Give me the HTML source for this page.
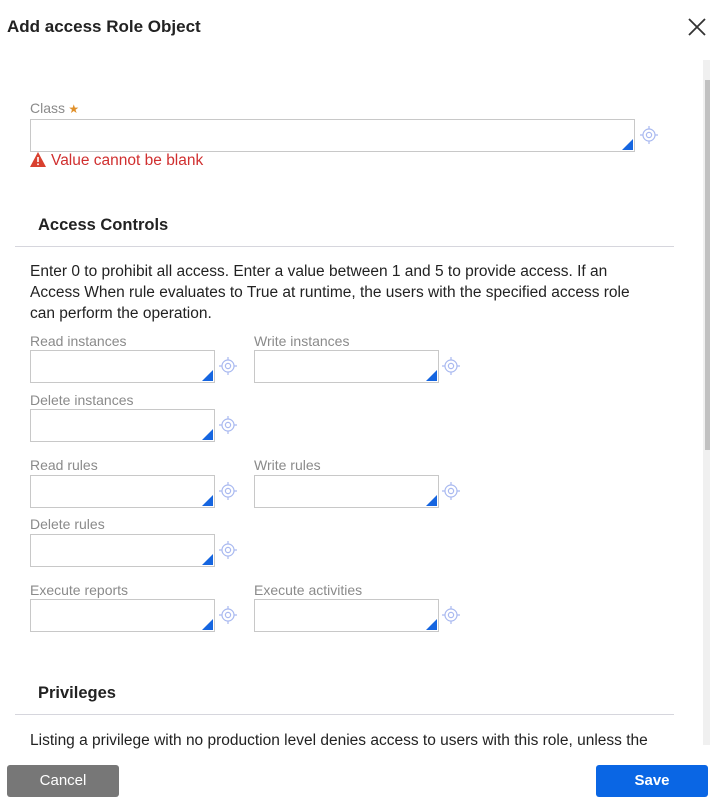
<!DOCTYPE html>
<html><head><style>
*{box-sizing:border-box;margin:0;padding:0}
body{width:710px;height:798px;overflow:hidden;background:#fff;font-family:"Liberation Sans",sans-serif;position:relative;color:#222}
.a{position:absolute}
.lbl{position:absolute;font-size:14px;color:#8a8a8a}
.inp{position:absolute;border:1px solid #c8c8c8;height:33px;background:#fff}
.inp:after{content:"";position:absolute;right:1px;bottom:1px;border-style:solid;border-width:0 0 11px 11px;border-color:transparent transparent #1565e0 transparent}
.ic{position:absolute;width:18px;height:18px}
.h{position:absolute;font-size:16.5px;font-weight:bold;color:#222}
.hr{position:absolute;left:15px;width:659px;height:1px;background:#d6d6dd}
.p{position:absolute;left:30px;font-size:15.5px;line-height:21px;color:#222;white-space:nowrap}
</style></head><body>
<div class="a" style="left:7px;top:17px;font-size:17px;font-weight:bold;color:#222">Add access Role Object</div>
<svg class="a" style="left:687px;top:17px" width="20" height="20" viewBox="0 0 20 20"><path d="M2 2L18 18M18 2L2 18" stroke="#333" stroke-width="1.8"/></svg>
<div class="a" style="left:703px;top:60px;width:7px;height:685px;background:#f0f0f0"></div>
<div class="a" style="left:705px;top:80px;width:5px;height:370px;background:#c1c1c1"></div>

<div class="lbl" style="left:30px;top:100px">Class<span style="color:#e0902a;font-size:12px"> ★</span></div>
<div class="inp" style="left:30px;top:119px;width:605px"></div>
<svg class="ic" style="left:640px;top:126px" viewBox="0 0 18 18"><circle cx="9" cy="9" r="6" fill="none" stroke="#a9b9f0" stroke-width="1.2"/><circle cx="9" cy="9" r="2.6" fill="none" stroke="#a9b9f0" stroke-width="1.2"/><path d="M9 0v3M9 15v3M0 9h3M15 9h3" stroke="#a9b9f0" stroke-width="1.2"/></svg>
<svg class="a" style="left:30px;top:152px" width="16" height="15" viewBox="0 0 16 15"><path d="M8 0L16 15H0Z" fill="#d9402f"/><rect x="7.2" y="5" width="1.6" height="5" fill="#fff"/><rect x="7.2" y="11.5" width="1.6" height="1.6" fill="#fff"/></svg>
<div class="a" style="left:51px;top:152px;font-size:15.5px;color:#d02f2f">Value cannot be blank</div>

<div class="h" style="left:38px;top:216px">Access Controls</div>
<div class="hr" style="top:246px"></div>
<div class="p" style="top:261px">Enter 0 to prohibit all access. Enter a value between 1 and 5 to provide access. If an<br>Access When rule evaluates to True at runtime, the users with the specified access role<br>can perform the operation.</div>

<div class="lbl" style="left:30px;top:333px">Read instances</div>
<div class="lbl" style="left:254px;top:333px">Write instances</div>
<div class="inp" style="left:30px;top:350px;width:185px"></div>
<div class="inp" style="left:254px;top:350px;width:185px"></div>
<div class="lbl" style="left:30px;top:392px">Delete instances</div>
<div class="inp" style="left:30px;top:409px;width:185px"></div>
<div class="lbl" style="left:30px;top:457px">Read rules</div>
<div class="lbl" style="left:254px;top:457px">Write rules</div>
<div class="inp" style="left:30px;top:475px;width:185px"></div>
<div class="inp" style="left:254px;top:475px;width:185px"></div>
<div class="lbl" style="left:30px;top:516px">Delete rules</div>
<div class="inp" style="left:30px;top:534px;width:185px"></div>
<div class="lbl" style="left:30px;top:582px">Execute reports</div>
<div class="lbl" style="left:254px;top:582px">Execute activities</div>
<div class="inp" style="left:30px;top:599px;width:185px"></div>
<div class="inp" style="left:254px;top:599px;width:185px"></div>

<svg width="0" height="0" style="position:absolute"><defs><g id="t"><circle cx="9" cy="9" r="6" fill="none" stroke="#a9b9f0" stroke-width="1.2"/><circle cx="9" cy="9" r="2.6" fill="none" stroke="#a9b9f0" stroke-width="1.2"/><path d="M9 0v3M9 15v3M0 9h3M15 9h3" stroke="#a9b9f0" stroke-width="1.2"/></g></defs></svg>
<svg class="ic" style="left:219px;top:357px" viewBox="0 0 18 18"><use href="#t"/></svg>
<svg class="ic" style="left:442px;top:357px" viewBox="0 0 18 18"><use href="#t"/></svg>
<svg class="ic" style="left:219px;top:416px" viewBox="0 0 18 18"><use href="#t"/></svg>
<svg class="ic" style="left:219px;top:482px" viewBox="0 0 18 18"><use href="#t"/></svg>
<svg class="ic" style="left:442px;top:482px" viewBox="0 0 18 18"><use href="#t"/></svg>
<svg class="ic" style="left:219px;top:541px" viewBox="0 0 18 18"><use href="#t"/></svg>
<svg class="ic" style="left:219px;top:606px" viewBox="0 0 18 18"><use href="#t"/></svg>
<svg class="ic" style="left:442px;top:606px" viewBox="0 0 18 18"><use href="#t"/></svg>

<div class="h" style="left:38px;top:684px">Privileges</div>
<div class="hr" style="top:714px"></div>
<div class="p" style="top:730px">Listing a privilege with no production level denies access to users with this role, unless the</div>

<div class="a" style="left:7px;top:765px;width:112px;height:32px;background:#777;border-radius:3px;color:#fff;font-size:15px;text-align:center;line-height:32px">Cancel</div>
<div class="a" style="left:596px;top:765px;width:112px;height:32px;background:#0a66e4;border-radius:3px;color:#fff;font-size:15px;font-weight:bold;text-align:center;line-height:32px">Save</div>
</body></html>
